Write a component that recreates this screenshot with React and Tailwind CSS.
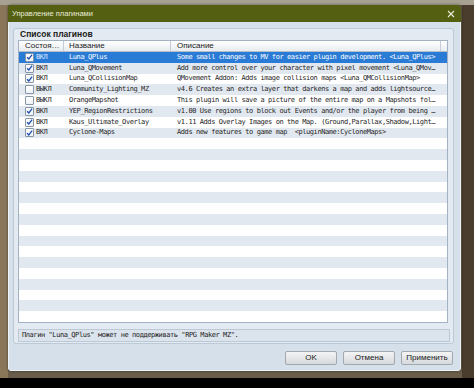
import React from 'react';

const plugins = [
  { on: true, name: 'Luna_QPlus', desc: 'Some small changes to MV for easier plugin development. <Luna_QPlus>' },
  { on: true, name: 'Luna_QMovement', desc: 'Add more control over your character with pixel movement <Luna_QMov…' },
  { on: true, name: 'Luna_QCollisionMap', desc: 'QMovement Addon: Adds image collision maps <Luna_QMCollisionMap>' },
  { on: false, name: 'Community_Lighting_MZ', desc: 'v4.6 Creates an extra layer that darkens a map and adds lightsource…' },
  { on: false, name: 'OrangeMapshot', desc: 'This plugin will save a picture of the entire map on a Mapshots fol…' },
  { on: true, name: 'YEP_RegionRestrictions', desc: 'v1.00 Use regions to block out Events and/or the player from being …' },
  { on: true, name: 'Kaus_Ultimate_Overlay', desc: 'v1.11 Adds Overlay Images on the Map. (Ground,Parallax,Shadow,Light…' },
  { on: true, name: 'Cyclone-Maps', desc: 'Adds new features to game map  <pluginName:CycloneMaps>' },
];

const mono = "font-['DejaVu_Sans_Mono',monospace] text-[7px] tracking-[-0.42px]";
const sans = "font-['Liberation_Sans',Arial,sans-serif]";

const Check = ({ on }) => (
  <span className="w-[9px] h-[9px] shrink-0 border border-[#8796a6] bg-[linear-gradient(#ffffff,#eef2f6)] rounded-[1px] flex items-center justify-center">
    {on && (
      <svg width="8" height="8" viewBox="0 0 8 8">
        <path d="M1.2 4.2 L3.2 6.3 L7 1.3" fill="none" stroke="#1f4fb0" strokeWidth="1.5" />
      </svg>
    )}
  </span>
);

const Row = ({ item, index }) => {
  const selected = index === 0;
  const bg = selected ? 'bg-[#2a7bd6] text-white' : index % 2 === 1 ? 'bg-[#e2e8ef] text-[#262626]' : 'bg-white text-[#262626]';
  return (
    <div className={`h-[10.8px] flex items-center ${bg} ${mono} whitespace-pre leading-none`}>
      {item ? (
        <>
          <div className="w-[45px] shrink-0 flex items-center pl-[6px] gap-[2px]">
            <Check on={item.on} />
            <span className={selected ? 'text-[#dfeaff]' : ''}>{item.on ? 'ВКЛ' : 'ВЫКЛ'}</span>
          </div>
          <div className="w-[107px] shrink-0 pl-[5px] overflow-hidden">{item.name}</div>
          <div className="w-[270px] shrink-0 pl-[6px] overflow-hidden">{item.desc}</div>
        </>
      ) : null}
    </div>
  );
};

const Btn = ({ children }) => (
  <button className={`w-[52px] h-[14px] border border-[#a3a8ae] rounded-[2px] bg-[linear-gradient(#f4f4f4,#d6d9dd)] text-[8px] text-[#222] leading-none ${sans}`}>
    {children}
  </button>
);

export default function App() {
  const rows = Array.from({ length: 25 }, (_, i) => plugins[i] || null);
  return (
    <div className="w-[474px] h-[388px] flex flex-col bg-black overflow-hidden">
      {/* фон карты */}
      <div className="h-[378px] pt-[5px] pl-[8px] bg-[linear-gradient(180deg,#a6a191_0,#a6a191_5px,transparent_5px),linear-gradient(90deg,#8a775a_0,#8a775a_8px,#6a5e4b_8px,#6a5e4b_462px,#4a3d2d_462px)]">
        <div className="w-[453px] h-[366px] flex flex-col rounded-[4px] overflow-hidden shadow-[0_0_3px_rgba(0,0,0,0.5)]">
          {/* заголовок окна */}
          <div className={`h-[17px] shrink-0 bg-[#545f12] flex items-center justify-between pl-[4px] pr-[6px] text-[#e8ecd8] text-[7.5px] ${sans}`}>
            <span>Управление плагинами</span>
            <svg width="8" height="8" viewBox="0 0 8 8">
              <path d="M1 1 L7 7 M7 1 L1 7" stroke="#e8ecd8" strokeWidth="1.1" />
            </svg>
          </div>

          <div className="flex-1 flex flex-col bg-[#d6e0ea] border-x border-b border-[#eef3f8] pl-[4px] pr-[6px] pt-[6px] pb-[4px]">
            {/* группа */}
            <div className="h-[316px] border border-[#bccad8] rounded-[3px] bg-[#e3eaf1] pl-[4px] pr-[6px] flex flex-col">
              <div className={`h-[11px] flex items-center pl-[2px] text-[8.5px] font-bold text-[#1a1a1a] ${sans}`}>
                Список плагинов
              </div>
              <div className="w-[430px] border border-[#a3b2c2] bg-white flex flex-col">
                <div className={`h-[11px] flex bg-[linear-gradient(#ffffff,#e8ecf0)] border-b border-[#b4bfca] text-[8px] text-[#222] leading-none ${sans}`}>
                  <div className="w-[45px] border-r border-[#c4cdd7] flex items-center pl-[6px]">Состоя…</div>
                  <div className="w-[107px] border-r border-[#c4cdd7] flex items-center pl-[5px]">Название</div>
                  <div className="w-[270px] border-r border-[#c4cdd7] flex items-center pl-[6px]">Описание</div>
                  <div className="flex-1" />
                </div>
                <div className="h-[270px] overflow-hidden">
                  {rows.map((item, i) => (
                    <Row key={i} item={item} index={i} />
                  ))}
                </div>
              </div>
              <div className={`mt-[6px] h-[13px] w-[432px] border border-[#bcc8d4] bg-[#dbe3ec] flex items-center pl-[3px] text-[#222] whitespace-pre ${mono}`}>
                Плагин "Luna_QPlus" может не поддерживать "RPG Maker MZ".
              </div>
            </div>

            {/* кнопки */}
            <div className="mt-auto flex justify-end gap-[6px] pr-[1px] pb-[1px]">
              <Btn>OK</Btn>
              <Btn>Отмена</Btn>
              <Btn>Применить</Btn>
            </div>
          </div>
        </div>
      </div>
    </div>
  );
}
